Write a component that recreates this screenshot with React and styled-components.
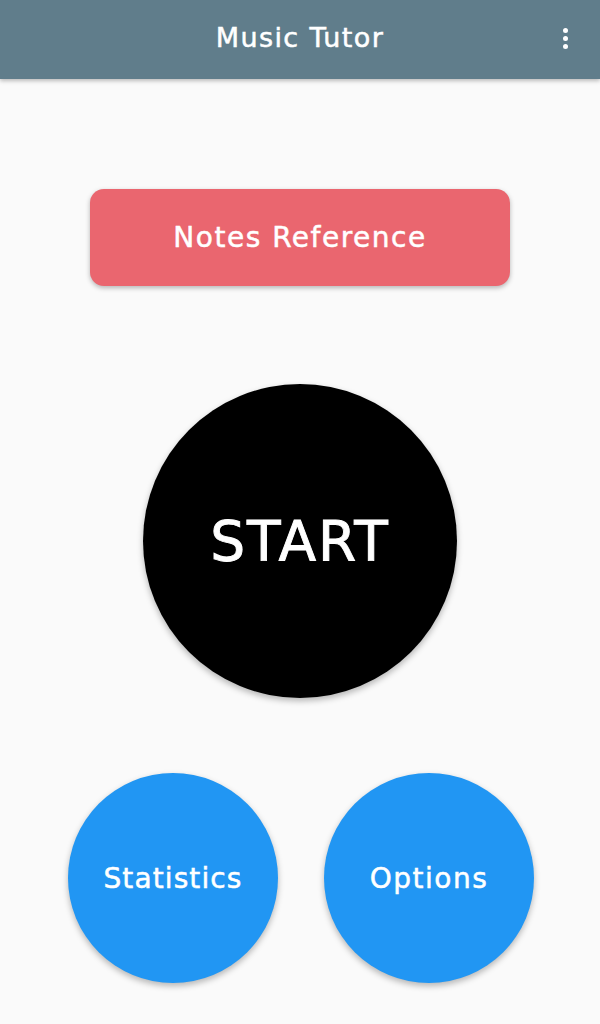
import React from "react";
import styled, { createGlobalStyle } from "styled-components";

const Global = createGlobalStyle`
  html, body { margin: 0; padding: 0; background: #fafafa; }
  body { font-family: "DejaVu Sans", "Open Sans", sans-serif; }
  * { box-sizing: border-box; }
`;

const Page = styled.div`
  width: 600px;
  height: 1024px;
  background: #fafafa;
  display: flex;
  flex-direction: column;
  overflow: hidden;
`;

const AppBar = styled.header`
  position: relative;
  height: 79px;
  background: #607d8b;
  display: flex;
  align-items: center;
  justify-content: center;
  box-shadow: 0 2px 4px rgba(0, 0, 0, 0.25);
  z-index: 1;
`;

const Title = styled.h1`
  margin: 0;
  color: #fff;
  font-size: 27px;
  font-weight: 400;
  letter-spacing: 1.4px;
  -webkit-text-stroke: 0.5px #fff;
  transform: translateY(-2px);
`;

const MenuButton = styled.div`
  position: absolute;
  right: 32px;
  top: 28px;
  display: flex;
  flex-direction: column;
  gap: 3px;
`;

const Dot = styled.span`
  width: 5px;
  height: 5px;
  border-radius: 50%;
  background: #fff;
`;

const Main = styled.main`
  flex: 1;
  display: flex;
  flex-direction: column;
  align-items: center;
`;

const RectButton = styled.div`
  margin-top: 110px;
  width: 420px;
  height: 97px;
  border-radius: 14px;
  background: #ea666f;
  color: #fff;
  display: flex;
  align-items: center;
  justify-content: center;
  font-size: 28px;
  letter-spacing: 1.5px;
  -webkit-text-stroke: 0.5px #fff;
  box-shadow: 0 2px 5px rgba(0, 0, 0, 0.28);
`;

const Circle = styled.div`
  width: ${(p) => p.size}px;
  height: ${(p) => p.size}px;
  border-radius: 50%;
  background: ${(p) => p.bg};
  color: #fff;
  display: flex;
  align-items: center;
  justify-content: center;
  font-size: ${(p) => p.fs}px;
  letter-spacing: ${(p) => p.ls || 0}px;
  -webkit-text-stroke: ${(p) => p.stroke || 0.5}px #fff;
  box-shadow: 0 3px 6px rgba(0, 0, 0, 0.28);
`;

const StartWrap = styled.div`
  margin-top: 98px;
`;

const Row = styled.div`
  margin-top: 75px;
  display: flex;
  gap: 46px;
  padding-left: 2px;
`;

export default function App() {
  return (
    <>
      <Global />
      <Page>
        <AppBar>
          <Title>Music Tutor</Title>
          <MenuButton>
            <Dot />
            <Dot />
            <Dot />
          </MenuButton>
        </AppBar>
        <Main>
          <RectButton>Notes Reference</RectButton>
          <StartWrap>
            <Circle size={314} bg="#000" fs={55} ls={2} stroke={0.9}>
              START
            </Circle>
          </StartWrap>
          <Row>
            <Circle size={210} bg="#2196f3" fs={28} ls={1.1}>
              Statistics
            </Circle>
            <Circle size={210} bg="#2196f3" fs={28} ls={1.5}>
              Options
            </Circle>
          </Row>
        </Main>
      </Page>
    </>
  );
}
